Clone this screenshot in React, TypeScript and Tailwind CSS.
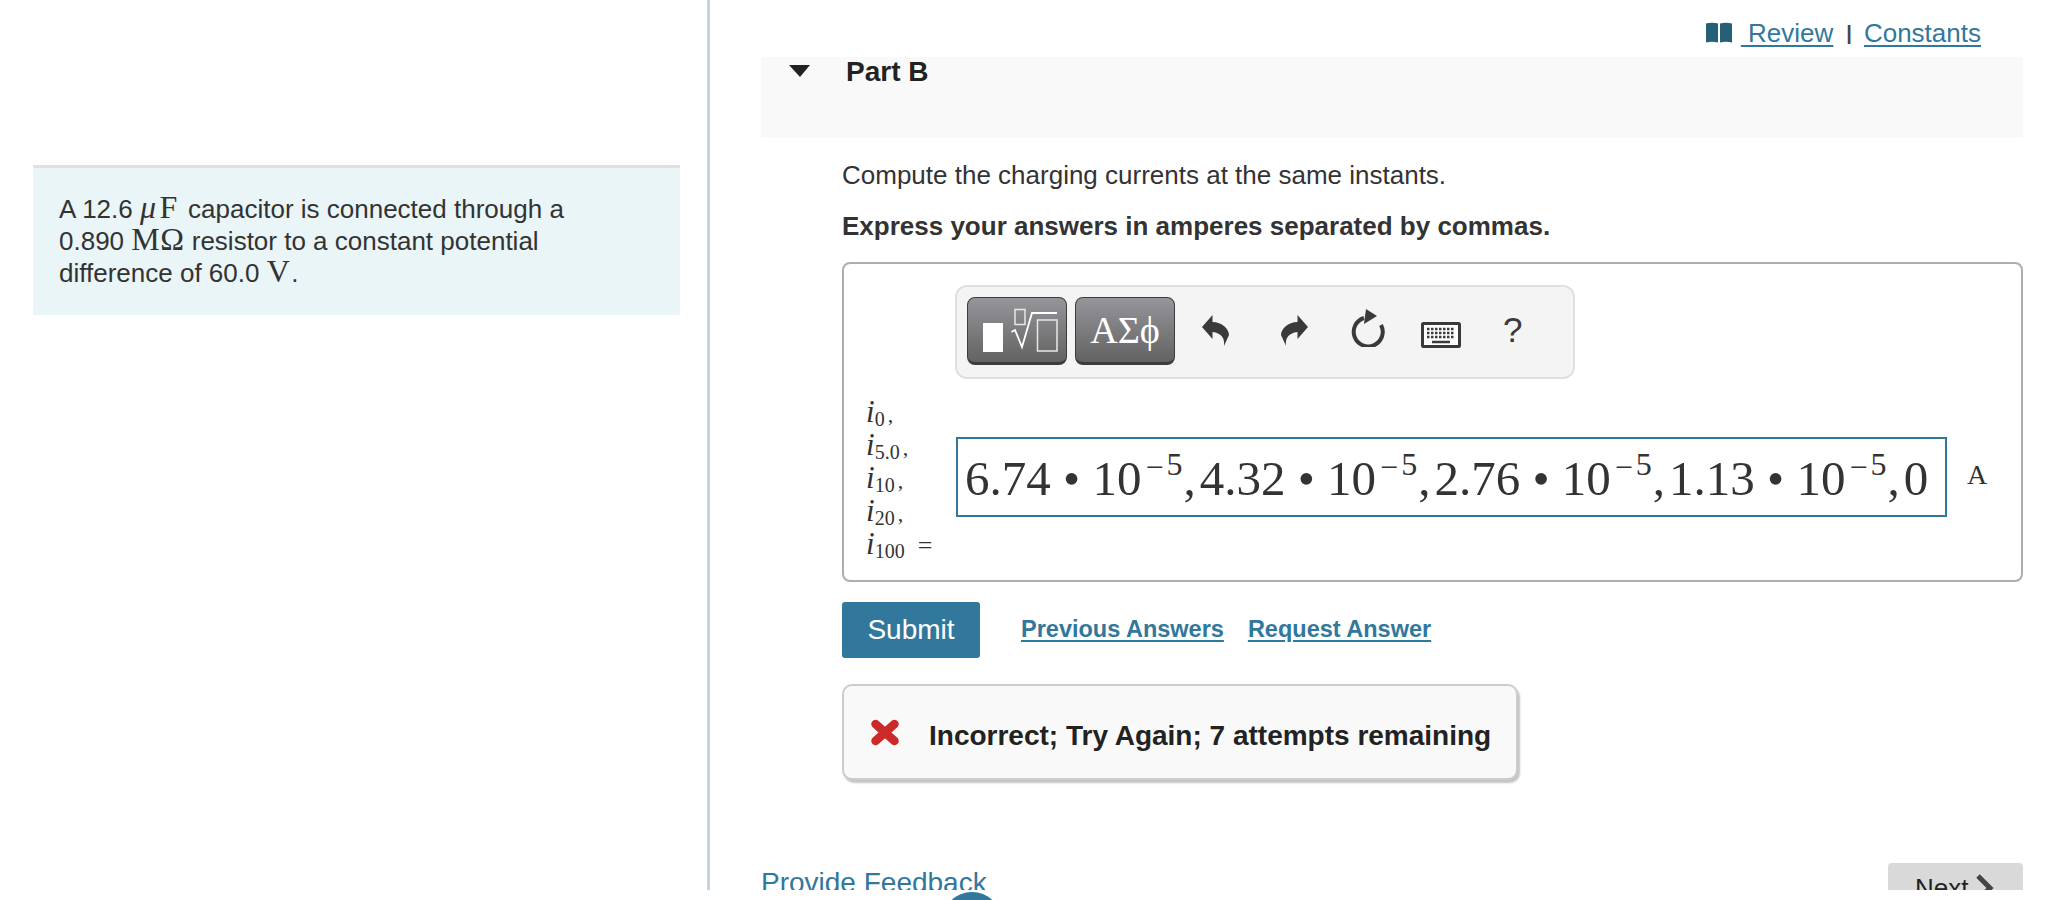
import React from "react";

const Sup = () => (
  <span className="relative -top-[17px] ml-[4px] mr-[1px] text-[32px]">
    −<span className="relative -top-[3px] ml-[3px]">5</span>
  </span>
);

const Comma = () => <span className="mr-[4px]">,</span>;

const Label = ({ sub, tail }: { sub: string; tail: string }) => (
  <div className="h-[33px] whitespace-nowrap leading-[33px] text-[#333]">
    <span className="italic text-[31px]">i</span>
    <span className="text-[20px] relative top-[4px]">{sub}</span>
    <span className={tail === "=" ? "text-[26px] ml-[13px]" : "text-[22px] ml-[3px]"}>{tail}</span>
  </div>
);

const mathCls = "font-['Liberation_Serif',serif] text-[32px] leading-[20px]";

export default function App() {
  return (
    <div className="relative h-[900px] w-[2052px] overflow-hidden bg-white text-[26px] text-[#333] font-['Liberation_Sans',Arial,sans-serif]">
      <div className="flex h-[890px] overflow-hidden">
        {/* left column */}
        <div className="w-[710px] shrink-0 border-r-[3px] border-[#c5d3e1] pl-[33px] pr-[27px] pt-[165px]">
          <div className="h-[150px] border-t-[3px] border-[#e0e0e0] bg-[#e9f5f7] px-[26px] pt-[25px] text-[26px] leading-[32px]">
            <p className="h-[32px]">
              A 12.6 <span className={`${mathCls} tracking-[3.5px]`}><i>μ</i>F</span> capacitor is connected through a
            </p>
            <p className="h-[32px]">
              0.890 <span className={`${mathCls} tracking-[0.5px]`}>MΩ</span> resistor to a constant potential
            </p>
            <p className="h-[32px]">
              difference of 60.0 <span className={`${mathCls} tracking-[1.5px]`}>V</span>.
            </p>
          </div>
        </div>

        {/* right column */}
        <div className="flex-1 min-w-0 pl-[51px] pr-[29px]">
          <div className="flex h-[57px] items-start justify-end pt-[16px] pr-[42px] leading-[34px] whitespace-nowrap">
            <svg width="28" height="22" viewBox="0 0 28 22" className="mt-[6px]">
              <path d="M1 1.5 C5 0.5 9 0.5 13 1.5 V20.5 C9 19.5 5 19.5 1 20.5 Z M15 1.5 C19 0.5 23 0.5 27 1.5 V20.5 C23 19.5 19 19.5 15 20.5 Z" fill="#255f78" />
            </svg>
            <a className="ml-[8px] text-[#31789c] underline underline-offset-[3px] whitespace-pre"> Review</a>
            <span className="ml-[13px] mr-[12px] text-[20px] font-bold text-[#444]">|</span>
            <a className="text-[#31789c] underline underline-offset-[3px]">Constants</a>
          </div>

          <div className="flex h-[81px] items-start bg-[#f9f9f9] pl-[28px]">
            <svg width="21" height="12" viewBox="0 0 21 12" className="mt-[8px]">
              <path d="M0 0 H21 L11 12 Z" fill="#222" />
            </svg>
            <span className="ml-[36px] mt-[-3px] text-[28px] font-bold leading-[36px] text-[#222]">Part B</span>
          </div>

          <div className="pl-[81px]">
            <p className="mt-[21px] h-[32px] leading-[32px] text-[26px]">Compute the charging currents at the same instants.</p>
            <p className="mt-[19px] h-[32px] leading-[32px] text-[26px] font-bold">Express your answers in amperes separated by commas.</p>

            <div className="mt-[20px] h-[320px] rounded-[8px] border-2 border-[#aeaeae] pl-[22px] pr-[3px] pt-[21px]">
              {/* toolbar */}
              <div className="ml-[89px] flex h-[94px] w-[620px] items-start rounded-[12px] border-2 border-[#e0e0e0] bg-[#f4f4f4] pl-[10px] pt-[10px]">
                <div className="h-[68px] w-[100px] rounded-[8px] border border-b-[3px] border-[#3c3c3c] bg-gradient-to-b from-[#96959b] to-[#636363]">
                  <svg width="98" height="64" viewBox="1 1 98 64">
                    <rect x="16" y="26" width="20" height="29" fill="#fff" />
                    <rect x="48" y="12.5" width="10" height="15" fill="none" stroke="#e8e8e8" strokeWidth="1.5" />
                    <path d="M44.5 35 L48 33 L55 50 L65 16 H90" fill="none" stroke="#fff" strokeWidth="1.8" />
                    <rect x="70.5" y="23" width="19.5" height="31" fill="none" stroke="#e8e8e8" strokeWidth="1.5" />
                  </svg>
                </div>
                <div className="ml-[8px] flex h-[68px] w-[100px] items-center justify-center rounded-[8px] border border-b-[3px] border-[#3c3c3c] bg-gradient-to-b from-[#96959b] to-[#636363] font-['Liberation_Serif',serif] text-[38px] text-white">
                  ΑΣϕ
                </div>
                <svg width="28" height="31" viewBox="0 0 28 31" className="ml-[27px] mt-[18px]">
                  <path d="M0 12 L10.5 0 V7 C20 7 27 14 27 20 L22 31 C23 24 20 18 10.5 17 V24 Z" fill="#3a3a3a" />
                </svg>
                <svg width="28" height="31" viewBox="0 0 28 31" className="ml-[50px] mt-[18px]">
                  <path d="M28 12 L17.5 0 V7 C8 7 1 14 1 20 L6 31 C5 24 8 18 17.5 17 V24 Z" fill="#3a3a3a" />
                </svg>
                <svg width="34" height="38" viewBox="0 0 34 38" className="ml-[43px] mt-[12px]">
                  <path d="M13 9 A14.5 14.5 0 1 0 30 16" fill="none" stroke="#3a3a3a" strokeWidth="4" />
                  <path d="M15 0 L26 7 L13 15 Z" fill="#3a3a3a" />
                </svg>
                <svg width="40" height="26" viewBox="0 0 40 26" className="ml-[36px] mt-[25px]">
                  <rect x="1.5" y="1.5" width="37" height="23" rx="1" fill="#fff" stroke="#3a3a3a" strokeWidth="3" />
                  <path d="M6 7 H34 M6 11 H34 M6 15 H34" stroke="#3a3a3a" strokeWidth="2.5" strokeDasharray="2.5 1.5" />
                  <path d="M11 20 H29" stroke="#3a3a3a" strokeWidth="2.5" />
                </svg>
                <span className="ml-[42px] mt-[13px] text-[35px] leading-[40px] text-[#3a3a3a]">?</span>
              </div>

              {/* answer row */}
              <div className="mt-[16px] flex items-center font-['Liberation_Serif',serif]">
                <div className="w-[90px] shrink-0">
                  <Label sub="0" tail="," />
                  <Label sub="5.0" tail="," />
                  <Label sub="10" tail="," />
                  <Label sub="20" tail="," />
                  <Label sub="100" tail="=" />
                </div>
                <div className="mb-[1px] flex h-[80px] w-[991px] shrink-0 items-center whitespace-nowrap border-2 border-[#31789c] pl-[7px] text-[49px] leading-none">
                  <span className="relative top-[1px]">6.74 • 10<Sup /><Comma />4.32 • 10<Sup /><Comma />2.76 • 10<Sup /><Comma />1.13 • 10<Sup /><Comma />0</span>
                </div>
                <span className="mb-[6px] ml-[20px] text-[28px]">A</span>
              </div>
            </div>

            <div className="mt-[20px] flex items-start">
              <button className="h-[56px] w-[138px] rounded-[3px] bg-[#31789c] text-[28px] text-white">Submit</button>
              <a className="ml-[41px] mt-[11px] text-[23.5px] font-bold leading-[32px] text-[#31789c] underline underline-offset-[3px]">Previous Answers</a>
              <a className="ml-[24px] mt-[11px] text-[23.5px] font-bold leading-[32px] text-[#31789c] underline underline-offset-[3px]">Request Answer</a>
            </div>

            <div className="mt-[26px] flex h-[96px] w-[676px] items-center rounded-[10px] border-2 border-[#cccccc] bg-[#f9f9f9] pl-[27px] pt-[8px] shadow-[2px_3px_2px_#c4c4c4]">
              <svg width="28" height="27" viewBox="0 0 28 27" className="-mt-[8px]">
                <path d="M4.5 5 L23.5 22 M23.5 5 L4.5 22" stroke="#cc2a2a" strokeWidth="8.5" strokeLinecap="round" />
              </svg>
              <span className="ml-[30px] whitespace-nowrap text-[28px] font-bold text-[#222]">Incorrect; Try Again; 7 attempts remaining</span>
            </div>
          </div>

          <div className="mt-[83px] flex items-start justify-between">
            <a className="mt-[2px] text-[28px] leading-[36px] text-[#31789c]">Provide Feedback</a>
            <div className="flex h-[40px] w-[135px] items-start rounded-[4px] bg-[#d9d9d9] pl-[27px] pt-[8px] text-[26px] leading-[34px] text-[#222]">
              Next
              <svg width="18" height="30" viewBox="0 0 18 30" className="ml-[8px] mt-[2px]">
                <path d="M2 3 L14 15 L2 27" fill="none" stroke="#444" strokeWidth="5" />
              </svg>
            </div>
          </div>
        </div>
      </div>
      <div className="absolute left-[942px] top-[892px] h-[60px] w-[60px] rounded-full bg-[#31789c]" />
    </div>
  );
}
